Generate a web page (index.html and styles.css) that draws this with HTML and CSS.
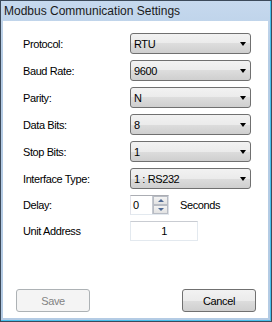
FILE: index.html
```
<!DOCTYPE html>
<html lang="en">
<head>
    <meta charset="UTF-8">
    <title>Modbus Communication Settings</title>
    <link rel="stylesheet" href="styles.css">
</head>
<body>

<div class="window">
    <div class="titlebar">Modbus Communication Settings</div>

    <div class="client">
        <div class="form">
            <label>Protocol:</label>
            <div class="combo"><span>RTU</span><i class="arrow"></i></div>

            <label>Baud Rate:</label>
            <div class="combo"><span>9600</span><i class="arrow"></i></div>

            <label>Parity:</label>
            <div class="combo"><span>N</span><i class="arrow"></i></div>

            <label>Data Bits:</label>
            <div class="combo"><span>8</span><i class="arrow"></i></div>

            <label>Stop Bits:</label>
            <div class="combo"><span>1</span><i class="arrow"></i></div>

            <label>Interface Type:</label>
            <div class="combo"><span>1 : RS232</span><i class="arrow"></i></div>

            <label>Delay:</label>
            <div class="delay">
                <div class="numeric">
                    <span class="value">0</span>
                    <div class="spin">
                        <span class="up"><i></i></span>
                        <span class="down"><i></i></span>
                    </div>
                </div>
                <span class="unit">Seconds</span>
            </div>

            <label>Unit Address</label>
            <div class="textbox">1</div>
        </div>

        <div class="buttons">
            <button class="btn" disabled>Save</button>
            <button class="btn">Cancel</button>
        </div>
    </div>
</div>

</body>
</html>
```

FILE: styles.css
```
body {
    margin: 0;
    padding: 0;
    background-color: #fff;
    font-family: "Liberation Sans", Arial, sans-serif;
}
.window {
    width: 272px;
    height: 322px;
    box-sizing: border-box;
    border: 1px solid #3c4a5a;
    padding: 0 3px 3px 2px;
    background: linear-gradient(#c6d9ee, #b4cbe4 60px, #b4cbe4);
    box-shadow: inset -1px -1px 0 #47c0ec;
    display: flex;
    flex-direction: column;
}
.titlebar {
    height: 20px;
    line-height: 20px;
    font-size: 12px;
    color: #1a1a1a;
    padding-left: 1px;
    white-space: nowrap;
}
.client {
    flex: 1;
    background-color: #fff;
    padding: 12px 12px 6px 20px;
    display: flex;
    flex-direction: column;
    font-size: 11px;
    letter-spacing: -0.4px;
    color: #000;
}
.form {
    display: grid;
    grid-template-columns: 107px 121px;
    row-gap: 6px;
    align-items: center;
}
.combo {
    height: 21px;
    box-sizing: border-box;
    border: 1px solid #707070;
    border-radius: 3px;
    background: linear-gradient(#f2f2f2 0%, #ebebeb 50%, #dddddd 50%, #cfcfcf 100%);
    display: flex;
    align-items: center;
    padding-left: 3px;
}
.combo .arrow {
    margin-left: auto;
    margin-right: 4px;
    width: 0;
    height: 0;
    border-left: 3.5px solid transparent;
    border-right: 3.5px solid transparent;
    border-top: 4px solid #000;
}
.delay {
    display: flex;
    align-items: center;
}
.numeric {
    width: 39px;
    height: 20px;
    box-sizing: border-box;
    border: 1px solid #abadb3;
    border-color: #abadb3 #dbdfe6 #e3e9ef #e2e3ea;
    display: flex;
    background-color: #fff;
}
.numeric .value {
    flex: 1;
    padding-left: 2px;
    line-height: 18px;
}
.spin {
    width: 15px;
    display: flex;
    flex-direction: column;
    border-left: 1px solid #c5c9d0;
}
.spin span {
    flex: 1;
    display: flex;
    align-items: center;
    justify-content: center;
    background: linear-gradient(#f3f3f3, #e2e2e2);
    border: 1px solid #b8bcc4;
}
.spin .up i {
    border-left: 3px solid transparent;
    border-right: 3px solid transparent;
    border-bottom: 3px solid #4f6a95;
}
.spin .down i {
    border-left: 3px solid transparent;
    border-right: 3px solid transparent;
    border-top: 3px solid #4f6a95;
}
.unit {
    margin-left: 11px;
}
.textbox {
    width: 68px;
    height: 20px;
    box-sizing: border-box;
    border: 1px solid #e3e9ef;
    border-top-color: #c9ccd2;
    text-align: center;
    line-height: 18px;
}
.buttons {
    margin-top: auto;
    margin-left: -7px;
    display: flex;
    justify-content: space-between;
}
.btn {
    width: 74px;
    height: 23px;
    font-family: "Liberation Sans", Arial, sans-serif;
    font-size: 11px;
    letter-spacing: -0.4px;
    color: #000;
    border: 1px solid #707070;
    border-radius: 3px;
    background: linear-gradient(#f2f2f2 0%, #ebebeb 50%, #dddddd 50%, #cfcfcf 100%);
    padding: 0;
}
.btn:disabled {
    color: #838383;
    border-color: #adb2b5;
    background: #f4f4f4;
}
```
